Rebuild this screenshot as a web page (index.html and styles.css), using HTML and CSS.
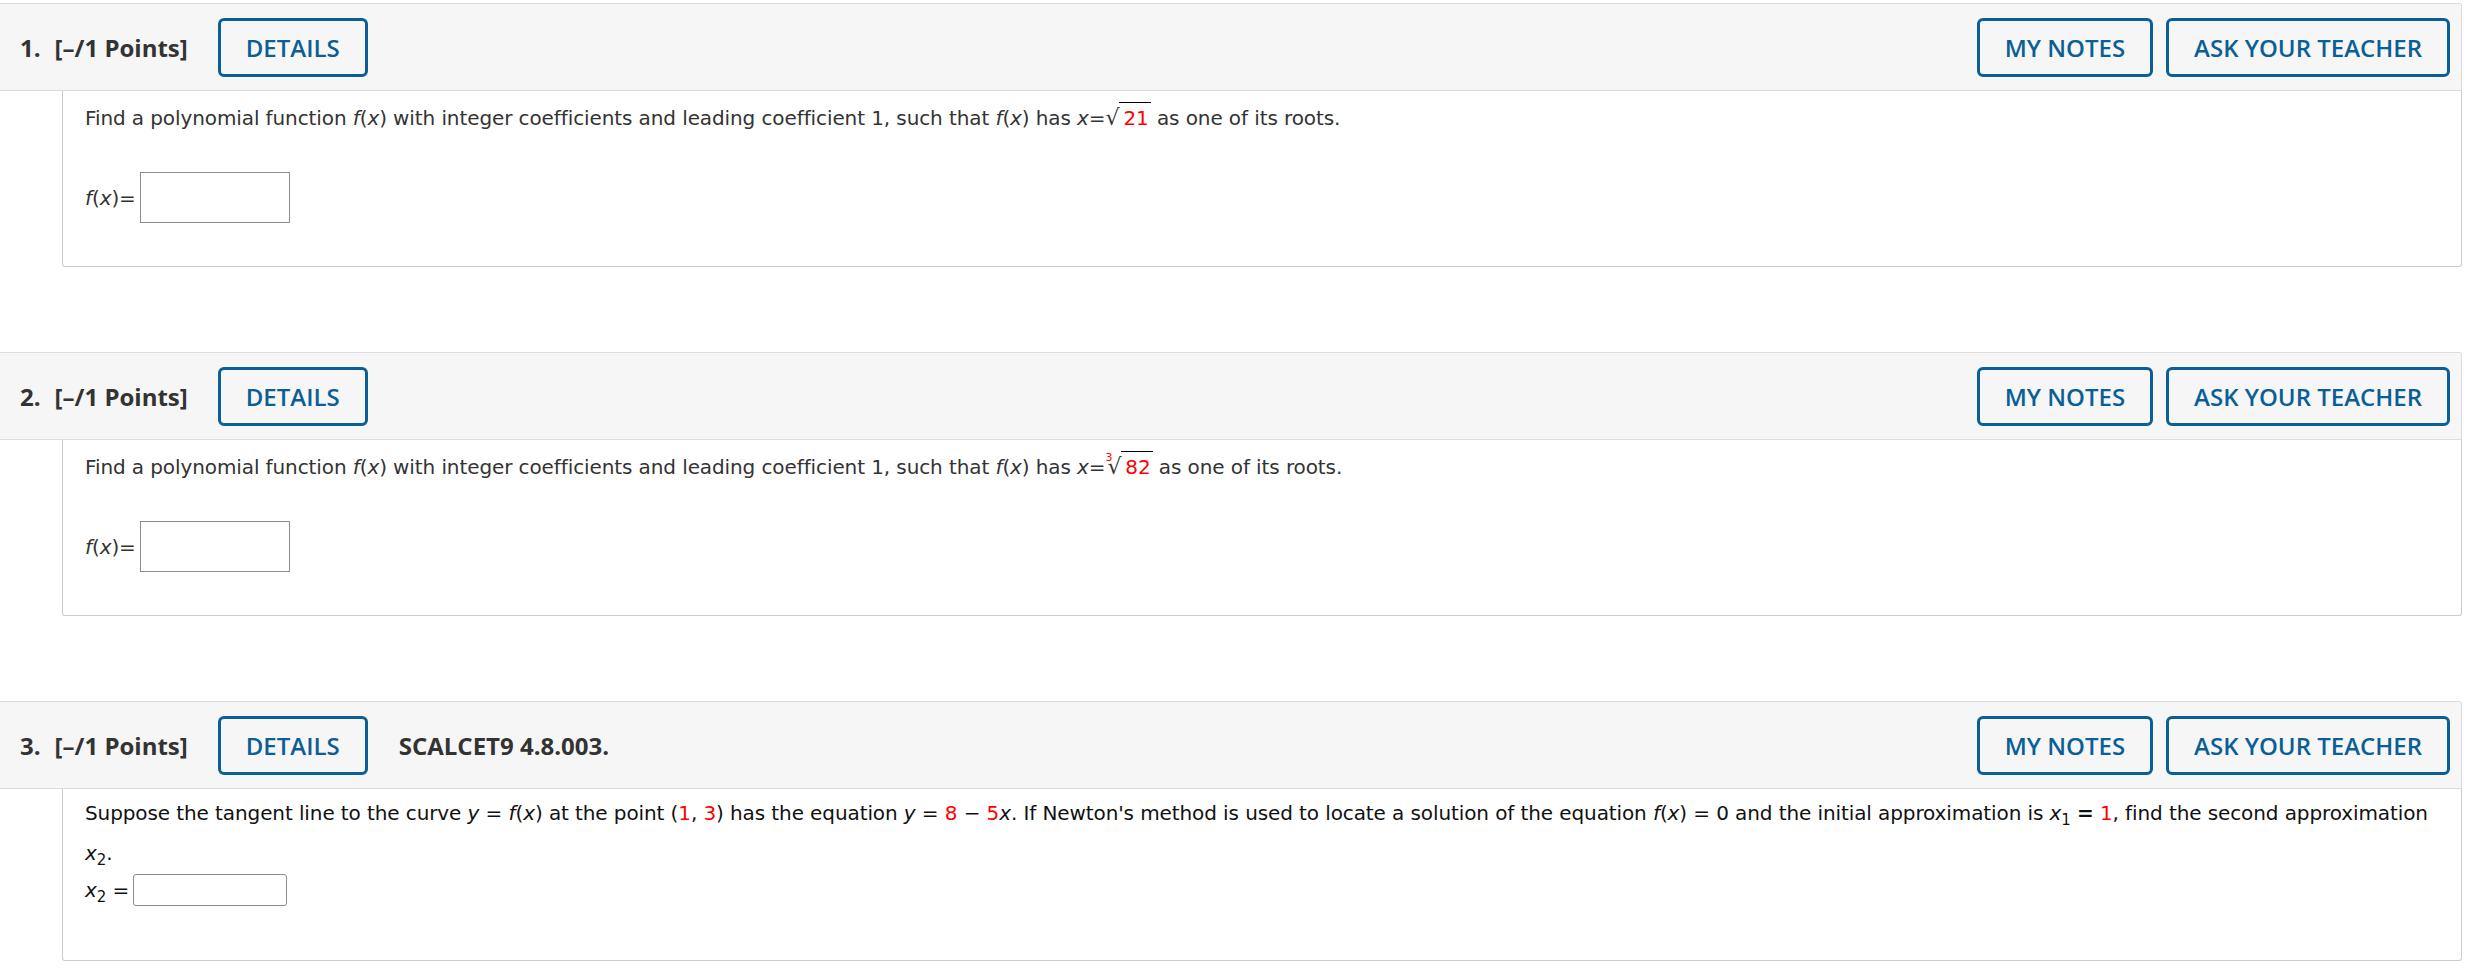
FILE: index.html
```html
<!DOCTYPE html>
<html lang="en">

<head>
    <meta charset="UTF-8">
    <meta name="viewport" content="width=device-width, initial-scale=1.0">
    <link rel="stylesheet" href="styles.css">
</head>

<body>
    <div class="question">
        <div class="q-header">
            <span class="q-num">1.</span>
            <span class="q-points">[–/1 Points]</span>
            <button class="q-btn details">DETAILS</button>
            <span class="q-spacer"></span>
            <button class="q-btn">MY NOTES</button>
            <button class="q-btn">ASK YOUR TEACHER</button>
        </div>
        <div class="q-body">
            <p class="q-text">Find a polynomial function <i>f</i>(<i>x</i>) with integer coefficients and leading coefficient 1, such that <i>f</i>(<i>x</i>) has <i>x</i>=<span class="root"><span class="root-sign">√</span><span class="radicand">21</span></span> as one of its roots.</p>
            <div class="answer">
                <span class="answer-label"><i>f</i>(<i>x</i>)=</span>
                <input class="answer-box" type="text">
            </div>
        </div>
    </div>

    <div class="question">
        <div class="q-header">
            <span class="q-num">2.</span>
            <span class="q-points">[–/1 Points]</span>
            <button class="q-btn details">DETAILS</button>
            <span class="q-spacer"></span>
            <button class="q-btn">MY NOTES</button>
            <button class="q-btn">ASK YOUR TEACHER</button>
        </div>
        <div class="q-body">
            <p class="q-text">Find a polynomial function <i>f</i>(<i>x</i>) with integer coefficients and leading coefficient 1, such that <i>f</i>(<i>x</i>) has <i>x</i>=<span class="root"><sup class="root-index">3</sup><span class="root-sign">√</span><span class="radicand">82</span></span> as one of its roots.</p>
            <div class="answer">
                <span class="answer-label"><i>f</i>(<i>x</i>)=</span>
                <input class="answer-box" type="text">
            </div>
        </div>
    </div>

    <div class="question">
        <div class="q-header">
            <span class="q-num">3.</span>
            <span class="q-points">[–/1 Points]</span>
            <button class="q-btn details">DETAILS</button>
            <span class="q-code">SCALCET9 4.8.003.</span>
            <span class="q-spacer"></span>
            <button class="q-btn">MY NOTES</button>
            <button class="q-btn">ASK YOUR TEACHER</button>
        </div>
        <div class="q-body short">
            <p class="q-text wide"><span class="line">Suppose the tangent line to the curve <i>y</i> = <i>f</i>(<i>x</i>) at the point (<span class="red">1</span>, <span class="red">3</span>) has the equation <i>y</i> = <span class="red">8</span> − <span class="red">5</span><i>x</i>. If Newton's method is used to locate a solution of the equation <i>f</i>(<i>x</i>) = 0 and the initial approximation is <i>x</i><sub>1</sub> <b>=</b> <span class="red">1</span>, find the second approximation</span><br><i>x</i><sub>2</sub>.</p>
            <div class="answer tight">
                <span class="answer-label"><i>x</i><sub>2</sub> =</span>
                <input class="answer-box round" type="text">
            </div>
        </div>
    </div>
</body>

</html>
```

FILE: styles.css
```css
body {
    margin: 0;
    padding: 3px 0 0 0;
    background: #ffffff;
}

.question {
    width: 2462px;
    margin-bottom: 85px;
}

.question:last-child {
    margin-bottom: 0;
}

.q-header {
    align-items: center;
    background: #f6f6f6;
    border: 1px solid #dcdcdc;
    border-left: none;
    border-radius: 0 3px 0 0;
    color: #333333;
    display: flex;
    font-family: "Open Sans", sans-serif;
    font-size: 24px;
    height: 86px;
    padding: 0 11px 0 20px;
}

.q-num {
    font-weight: bold;
    margin-right: 14px;
}

.q-points {
    font-weight: bold;
}

.q-code {
    font-weight: bold;
    margin-left: 31px;
}

.q-spacer {
    flex: 1;
}

.q-btn {
    background: transparent;
    border: 3px solid #0b5f96;
    border-radius: 6px;
    color: #0b5f96;
    font-family: "Open Sans", sans-serif;
    font-size: 24px;
    font-weight: 600;
    height: 59px;
    margin-left: 13px;
    padding: 0 25px;
}

.q-btn.details {
    margin-left: 30px;
}

.q-body {
    border: 1px solid #cccccc;
    border-top: none;
    border-radius: 0 0 3px 3px;
    box-sizing: border-box;
    color: #333333;
    font-family: "DejaVu Sans", Verdana, sans-serif;
    font-size: 20px;
    height: 176px;
    letter-spacing: -0.1px;
    margin-left: 62px;
    padding: 9px 10px 0 22px;
}

.q-body.short {
    color: #111111;
    height: 172px;
    padding-top: 4px;
}

.q-text {
    line-height: 35px;
    margin: 0;
}

.q-text.wide {
    line-height: 40px;
}

.q-text .line {
    white-space: nowrap;
}

.red {
    color: #ff0000;
}

.root {
    white-space: nowrap;
}

.root-sign {
    color: #333333;
    font-size: 22px;
}

.radicand {
    border-top: 1px solid #000000;
    color: #ff0000;
    padding: 3px 2px 0 4px;
}

.root-index {
    color: #ff0000;
    font-size: 11px;
    line-height: 0;
    margin-right: -5px;
    vertical-align: 13px;
}

sub {
    font-size: 15px;
    line-height: 0;
}

.answer {
    align-items: center;
    display: flex;
    margin-top: 36px;
}

.answer.tight {
    margin-top: 1px;
}

.answer-label {
    margin-right: 4px;
}

.answer-box {
    border: 1px solid #8c8c8c;
    box-sizing: border-box;
    height: 51px;
    width: 150px;
}

.answer-box.round {
    border-radius: 3px;
    height: 32px;
    width: 154px;
}
```
